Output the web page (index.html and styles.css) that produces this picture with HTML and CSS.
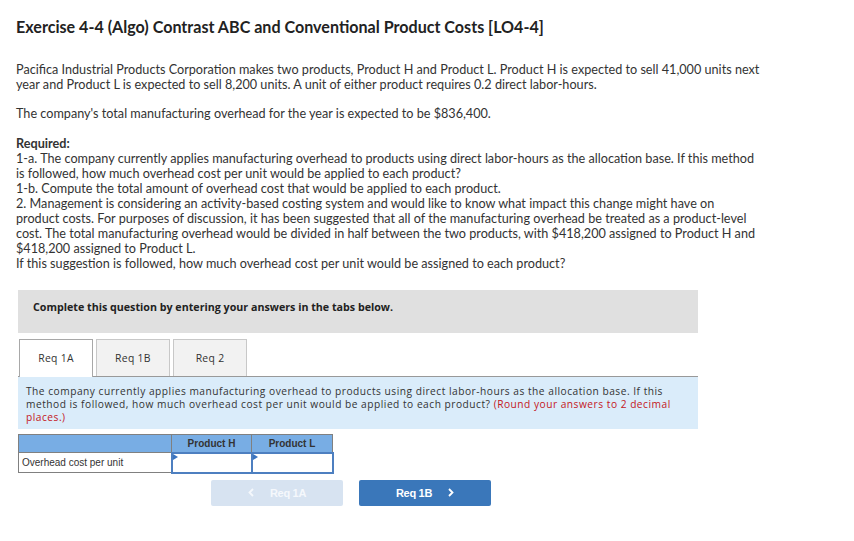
FILE: index.html
```html
<!DOCTYPE html>
<html>
<head>
<meta charset="utf-8">
<link rel="stylesheet" href="styles.css">
</head>
<body>
<div class="page">
  <h1 class="title">Exercise 4-4 (Algo) Contrast ABC and Conventional Product Costs [LO4-4]</h1>
  <p class="para first">Pacifica Industrial Products Corporation makes two products, Product H and Product L. Product H is expected to sell 41,000 units next year and Product L is expected to sell 8,200 units. A unit of either product requires 0.2 direct labor-hours.</p>
  <p class="para second">The company's total manufacturing overhead for the year is expected to be $836,400.</p>
  <div class="para req">
    <div class="req-head">Required:</div>
    <div>1-a. The company currently applies manufacturing overhead to products using direct labor-hours as the allocation base. If this method is followed, how much overhead cost per unit would be applied to each product?</div>
    <div>1-b. Compute the total amount of overhead cost that would be applied to each product.</div>
    <div>2. Management is considering an activity-based costing system and would like to know what impact this change might have on<br>product costs. For purposes of discussion, it has been suggested that all of the manufacturing overhead be treated as a product-level cost. The total manufacturing overhead would be divided in half between the two products, with $418,200 assigned to Product H and $418,200 assigned to Product L.</div>
    <div>If this suggestion is followed, how much overhead cost per unit would be assigned to each product?</div>
  </div>

  <div class="banner">Complete this question by entering your answers in the tabs below.</div>

  <div class="tabs">
    <div class="tab active">Req 1A</div>
    <div class="tab">Req 1B</div>
    <div class="tab">Req 2</div>
  </div>
  <div class="panel">The company currently applies manufacturing overhead to products using direct labor-hours as the allocation base. If this method is followed, how much overhead cost per unit would be applied to each product? <span class="red">(Round your answers to 2 decimal places.)</span></div>

  <table class="grid">
    <tr class="head">
      <th class="c1"></th>
      <th class="c2">Product H</th>
      <th class="c3">Product L</th>
    </tr>
    <tr>
      <td class="label">Overhead cost per unit</td>
      <td class="input"><span class="flag"></span></td>
      <td class="input"><span class="flag"></span></td>
    </tr>
  </table>

  <div class="nav">
    <div class="btn prev">
      <svg class="chev" width="6" height="9" viewBox="0 0 6 9"><path d="M5 1 L1.5 4.5 L5 8" fill="none" stroke="currentColor" stroke-width="1.8"/></svg>
      <span>Req 1A</span>
    </div>
    <div class="btn next">
      <span>Req 1B</span>
      <svg class="chev" width="6" height="9" viewBox="0 0 6 9"><path d="M1 1 L4.5 4.5 L1 8" fill="none" stroke="currentColor" stroke-width="1.8"/></svg>
    </div>
  </div>
</div>
</body>
</html>
```

FILE: styles.css
```css
* { box-sizing: border-box; }
html, body { margin: 0; padding: 0; background: #fff; }
body { font-family: "Lato", "Liberation Sans", sans-serif; color: #333; }
.page { padding: 18px 0 0 16px; }
.title {
  margin: 0;
  font-size: 16.1px;
  font-weight: 700;
  color: #222;
  line-height: 18px;
}
.para {
  margin: 0;
  width: 746px;
  font-size: 12.65px;
  line-height: 15px;
  color: #333;
}
.para.first { margin-top: 26px; }
.para.second { margin-top: 14px; }
.para.req { margin-top: 15px; }
.req-head { font-weight: 700; }

.banner {
  margin: 19px 0 0 2px;
  width: 680px;
  height: 43px;
  background: #e0e0e0;
  padding: 10px 0 0 15px;
  font-family: "Open Sans", "Noto Sans", sans-serif;
  font-size: 10.7px;
  font-weight: 700;
  color: #222;
}

.tabs { display: flex; gap: 3px; margin: 6px 0 0 3px; height: 37px; }
.tab {
  width: 74px;
  height: 37px;
  border: 1px solid #c8c8c8;
  border-bottom: none;
  background: #f2f2f2;
  font-family: "Open Sans", "Noto Sans", sans-serif;
  font-size: 10.4px;
  letter-spacing: 0.3px;
  color: #333;
  display: flex;
  align-items: center;
  justify-content: center;
  padding-bottom: 1px;
}
.tab.active { background: #fff; border-color: #a8a8a8; position: relative; z-index: 1; height: 38px; }

.panel {
  margin-left: 2px;
  width: 680px;
  min-height: 53px;
  background: #daecfa;
  border-top: 1px solid #999;
  padding: 8px 18px 4px 8px;
  font-family: "Open Sans", "Noto Sans", sans-serif;
  font-size: 10.2px;
  letter-spacing: 0.5px;
  line-height: 13px;
  color: #333;
}
.red { color: #c4161c; }

.grid {
  margin: 5px 0 0 2px;
  border-collapse: collapse;
  font-family: "Liberation Sans", Arial, sans-serif;
  font-size: 10px;
}
.grid th, .grid td { border: 1px solid #808080; padding: 0; }
.grid .head th {
  background: #78ade4;
  height: 18px;
  font-weight: 700;
  color: #333;
  text-align: center;
}
.c1 { width: 153px; }
.c2 { width: 80px; }
.c3 { width: 81px; }
.grid td { height: 20px; }
.grid td.label { padding-left: 3px; color: #333; }
.grid td.input { position: relative; border: 2px solid #4d7fc0; background: #fff; }
.flag {
  position: absolute;
  left: 0; top: 0;
  width: 0; height: 0;
  border-top: 3px solid transparent;
  border-bottom: 3px solid transparent;
  border-left: 5px solid #3a74c0;
}

.nav { display: flex; gap: 16px; margin: 6px 0 0 195px; }
.btn {
  width: 132px;
  height: 26px;
  border-radius: 2px;
  display: flex;
  align-items: center;
  justify-content: center;
  gap: 10px;
  font-family: "Liberation Sans", Arial, sans-serif;
  font-size: 11px;
  font-weight: 700;
  color: #fff;
  letter-spacing: -0.3px;
}
.btn.prev { background: #d7e3f1; color: #f5f8fc; }
.btn.next { background: #3a77ba; }
.prev .chev { margin-right: 6px; }
.next .chev { margin-left: 6px; }
```
